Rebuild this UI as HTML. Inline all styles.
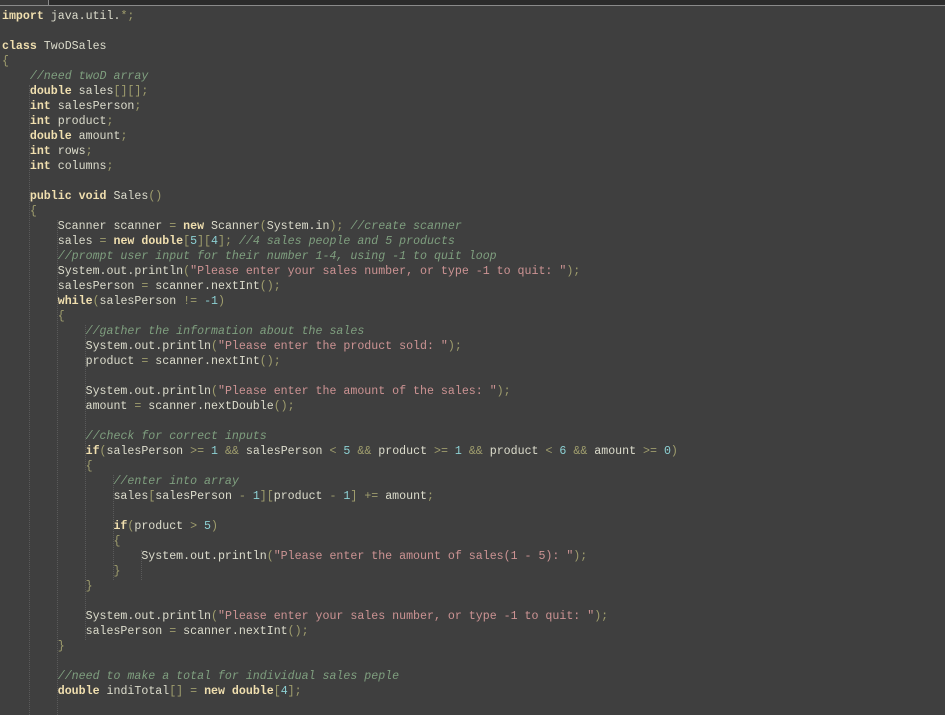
<!DOCTYPE html>
<html><head><meta charset="utf-8"><style>
html,body{margin:0;padding:0;background:#3f3f3f;width:945px;height:715px;overflow:hidden;position:relative}
.top{position:absolute;left:0;top:0;width:945px;height:5px;background:#2b2b2b;border-bottom:1px solid #8a8a8a}
.tab{position:absolute;left:0;top:0;width:48px;height:5px;background:#3a3a3a;border-right:1px solid #8a8a8a}
pre{position:absolute;left:2px;top:9px;margin:0;font-family:"Liberation Mono",monospace;font-size:11.62px;line-height:15px;color:#dcdccc}
.k{color:#f0dfaf;font-weight:bold}
.c{color:#7f9f7f;font-style:italic}
.s{color:#cc9393}
.n{color:#8cd0d3}
.o{color:#9f9d6d}
.g{position:absolute;width:0;border-left:1px dotted #5a5a5a}
</style></head><body>
<div class="top"></div><div class="tab"></div>
<div class="g" style="left:29px;top:85px;height:630px"></div>
<div class="g" style="left:57px;top:220px;height:495px"></div>
<div class="g" style="left:85px;top:325px;height:315px"></div>
<div class="g" style="left:113px;top:475px;height:105px"></div>
<div class="g" style="left:141px;top:550px;height:30px"></div>
<pre><span class="k">import</span> java.util.<span class="o">*;</span>

<span class="k">class</span> TwoDSales
<span class="o">{</span>
    <span class="c">//need twoD array</span>
    <span class="k">double</span> sales<span class="o">[][];</span>
    <span class="k">int</span> salesPerson<span class="o">;</span>
    <span class="k">int</span> product<span class="o">;</span>
    <span class="k">double</span> amount<span class="o">;</span>
    <span class="k">int</span> rows<span class="o">;</span>
    <span class="k">int</span> columns<span class="o">;</span>

    <span class="k">public void</span> Sales<span class="o">()</span>
    <span class="o">{</span>
        Scanner scanner <span class="o">=</span> <span class="k">new</span> Scanner<span class="o">(</span>System.in<span class="o">);</span> <span class="c">//create scanner</span>
        sales <span class="o">=</span> <span class="k">new double</span><span class="o">[</span><span class="n">5</span><span class="o">][</span><span class="n">4</span><span class="o">];</span> <span class="c">//4 sales people and 5 products</span>
        <span class="c">//prompt user input for their number 1-4, using -1 to quit loop</span>
        System.out.println<span class="o">(</span><span class="s">"Please enter your sales number, or type -1 to quit: "</span><span class="o">);</span>
        salesPerson <span class="o">=</span> scanner.nextInt<span class="o">();</span>
        <span class="k">while</span><span class="o">(</span>salesPerson <span class="o">!=</span> <span class="n">-1</span><span class="o">)</span>
        <span class="o">{</span>
            <span class="c">//gather the information about the sales</span>
            System.out.println<span class="o">(</span><span class="s">"Please enter the product sold: "</span><span class="o">);</span>
            product <span class="o">=</span> scanner.nextInt<span class="o">();</span>

            System.out.println<span class="o">(</span><span class="s">"Please enter the amount of the sales: "</span><span class="o">);</span>
            amount <span class="o">=</span> scanner.nextDouble<span class="o">();</span>

            <span class="c">//check for correct inputs</span>
            <span class="k">if</span><span class="o">(</span>salesPerson <span class="o">&gt;=</span> <span class="n">1</span> <span class="o">&amp;&amp;</span> salesPerson <span class="o">&lt;</span> <span class="n">5</span> <span class="o">&amp;&amp;</span> product <span class="o">&gt;=</span> <span class="n">1</span> <span class="o">&amp;&amp;</span> product <span class="o">&lt;</span> <span class="n">6</span> <span class="o">&amp;&amp;</span> amount <span class="o">&gt;=</span> <span class="n">0</span><span class="o">)</span>
            <span class="o">{</span>
                <span class="c">//enter into array</span>
                sales<span class="o">[</span>salesPerson <span class="o">-</span> <span class="n">1</span><span class="o">][</span>product <span class="o">-</span> <span class="n">1</span><span class="o">]</span> <span class="o">+=</span> amount<span class="o">;</span>

                <span class="k">if</span><span class="o">(</span>product <span class="o">&gt;</span> <span class="n">5</span><span class="o">)</span>
                <span class="o">{</span>
                    System.out.println<span class="o">(</span><span class="s">"Please enter the amount of sales(1 - 5): "</span><span class="o">);</span>
                <span class="o">}</span>
            <span class="o">}</span>

            System.out.println<span class="o">(</span><span class="s">"Please enter your sales number, or type -1 to quit: "</span><span class="o">);</span>
            salesPerson <span class="o">=</span> scanner.nextInt<span class="o">();</span>
        <span class="o">}</span>

        <span class="c">//need to make a total for individual sales peple</span>
        <span class="k">double</span> indiTotal<span class="o">[]</span> <span class="o">=</span> <span class="k">new double</span><span class="o">[</span><span class="n">4</span><span class="o">];</span>
</pre>
</body></html>
